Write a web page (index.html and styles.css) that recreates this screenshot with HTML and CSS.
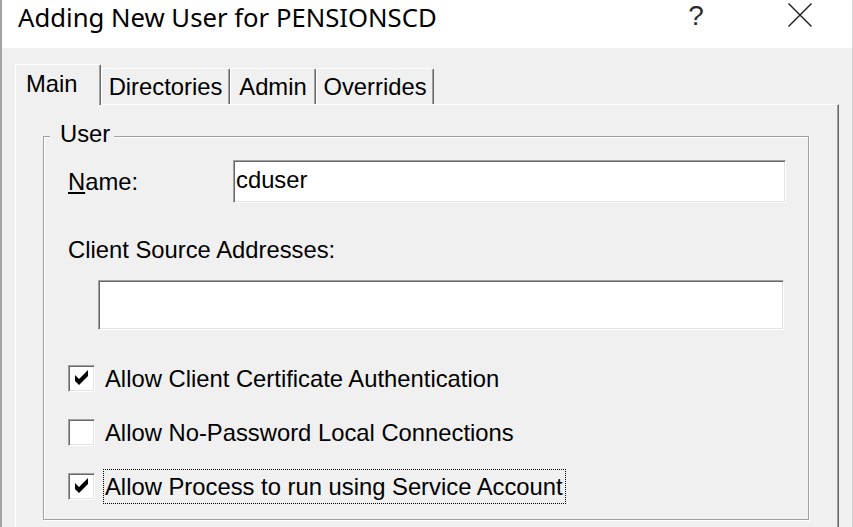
FILE: index.html
```html
<!DOCTYPE html>
<html lang="en">
<head>
<meta charset="utf-8">
<title>Adding New User for PENSIONSCD</title>
<link rel="stylesheet" href="styles.css">
</head>
<body>
<div class="window">
  <header class="titlebar">
    <span class="title">Adding New User for PENSIONSCD</span>
    <div class="caption-buttons">
      <span class="cap-btn help">?</span>
      <span class="cap-btn close">
        <svg width="24" height="24" viewBox="0 0 24 24" aria-hidden="true">
          <path d="M0.5 0.5 L23.5 23.5 M23.5 0.5 L0.5 23.5" stroke="#1a1a1a" stroke-width="1.4" fill="none"/>
        </svg>
      </span>
    </div>
  </header>
  <main class="client">
    <nav class="tabs">
      <div class="tab tab-active">Main</div>
      <div class="tab tab-dirs">Directories</div>
      <div class="tab tab-admin">Admin</div>
      <div class="tab tab-over">Overrides</div>
    </nav>
    <section class="panel">
      <div class="group">
        <span class="group-title">User</span>
        <div class="name-row">
          <label class="field-label name-label"><u>N</u>ame:</label>
          <div class="textbox name-box">cduser</div>
        </div>
        <label class="field-label addr-label">Client Source Addresses:</label>
        <div class="textbox addr-box"></div>
        <div class="checks">
          <div class="check-row">
            <span class="cbox">
              <svg width="25" height="25" viewBox="0 0 25 25" aria-hidden="true"><polygon points="6,9 10,13 19,4 19,10 10,19 6,15" fill="#000"/></svg>
            </span>
            <span class="check-label">Allow Client Certificate Authentication</span>
          </div>
          <div class="check-row">
            <span class="cbox"></span>
            <span class="check-label">Allow No-Password Local Connections</span>
          </div>
          <div class="check-row">
            <span class="cbox">
              <svg width="25" height="25" viewBox="0 0 25 25" aria-hidden="true"><polygon points="6,9 10,13 19,4 19,10 10,19 6,15" fill="#000"/></svg>
            </span>
            <span class="check-label focused">Allow Process to run using Service Account</span>
          </div>
        </div>
      </div>
    </section>
  </main>
</div>
</body>
</html>
```

FILE: styles.css
```css
* { box-sizing: border-box; }

html, body {
  margin: 0;
  padding: 0;
}

body {
  width: 853px;
  height: 527px;
  overflow: hidden;
  background: #f0f0f0;
  font-family: "Liberation Sans", Arial, sans-serif;
  font-size: 23.8px;
  color: #000;
}

.window {
  height: 527px;
  border-left: 2px solid #a3a3a3;
  border-right: 1px solid #d4d4d4;
  background: #f0f0f0;
  overflow: hidden;
}

/* Title bar */
.titlebar {
  height: 48px;
  background: #fff;
  display: flex;
  align-items: flex-start;
}

.title {
  font-family: "Noto Sans", sans-serif;
  font-size: 25.7px;
  line-height: 35px;
  padding-left: 16px;
  color: #000;
}

.caption-buttons {
  margin-left: auto;
  display: flex;
}

.cap-btn {
  width: 104px;
  height: 32px;
  display: flex;
  align-items: center;
  justify-content: center;
}

.help {
  font-family: "Liberation Sans", Arial, sans-serif;
  font-size: 28px;
  line-height: 32px;
  color: #2a2a2a;
}

.close {
  height: 29px;
}

/* Tabs */
.client {
  padding-left: 13px;
  padding-top: 16px;
}

.tabs {
  display: flex;
  align-items: flex-end;
  position: relative;
  z-index: 1;
}

.tab {
  height: 36px;
  border-top: 1px solid #fff;
  border-left: 1px solid #fff;
  border-right: 1px solid #696969;
  box-shadow: inset -1px 0 #a0a0a0;
  border-radius: 2px 2px 0 0;
  padding-top: 4px;
  line-height: 27px;
  text-align: center;
  background: #f0f0f0;
  white-space: nowrap;
}

.tab-active {
  width: 86px;
  height: 41px;
  margin-bottom: -1px;
  padding-top: 5px;
  padding-left: 10px;
  text-align: left;
}

.tab-dirs { width: 129px; }
.tab-admin { width: 86px; }
.tab-over { width: 118px; }

.panel {
  width: 824px;
  height: 440px;
  border-top: 1px solid #fff;
  border-left: 1px solid #fff;
  border-right: 1px solid #696969;
  box-shadow: inset -1px 0 #a0a0a0;
  padding: 31px 29px 0 27px;
}

/* Group box */
.group {
  position: relative;
  height: 384px;
  border: 1px solid #a0a0a0;
  box-shadow: inset 1px 1px #fff, 1px 1px #fff;
  padding: 23px 0 0 24px;
}

.group-title {
  position: absolute;
  top: -17px;
  left: 6px;
  padding: 0 4px 0 10px;
  background: #f0f0f0;
  line-height: 27px;
}

.field-label {
  display: block;
  line-height: 27px;
}

.name-row {
  display: flex;
  align-items: center;
}

.name-label {
  width: 165px;
}

.textbox {
  background: #fff;
  border: 1px solid;
  border-color: #a0a0a0 #fff #fff #a0a0a0;
  box-shadow: inset 1px 1px #696969, inset -1px -1px #e3e3e3;
  line-height: 27px;
}

.name-box {
  width: 553px;
  height: 43px;
  padding: 5px 0 0 2px;
}

.addr-label {
  margin-top: 33px;
}

.addr-box {
  width: 686px;
  height: 50px;
  margin: 17px 0 0 30px;
}

/* Checkboxes */
.checks {
  display: flex;
  flex-direction: column;
  gap: 19px;
  margin-top: 31px;
}

.check-row {
  display: flex;
  align-items: center;
}

.cbox {
  width: 27px;
  height: 27px;
  flex: none;
  background: #fff;
  border: 1px solid;
  border-color: #a0a0a0 #fff #fff #a0a0a0;
  box-shadow: inset 1px 1px #696969, inset -1px -1px #e3e3e3;
  display: flex;
}

.check-label {
  margin-left: 8px;
  padding: 3px 2px 3px 1px;
  line-height: 27px;
  border: 1px solid transparent;
  white-space: nowrap;
}

.check-label.focused {
  border: 1px dotted #000;
}
```
